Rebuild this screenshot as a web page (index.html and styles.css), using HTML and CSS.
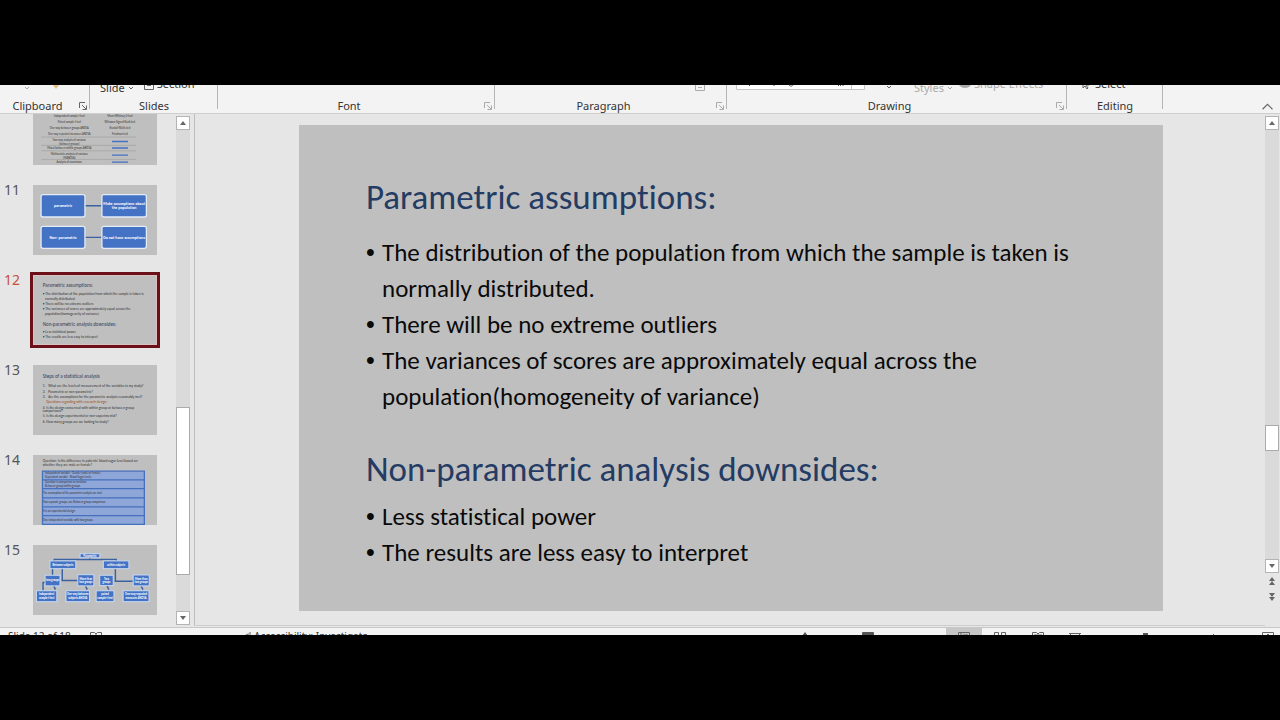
FILE: index.html
```html
<!DOCTYPE html>
<html lang="en">
<head>
<meta charset="utf-8">
<title>Presentation editor</title>
<link rel="stylesheet" href="styles.css">
</head>
<body>
<div class="window">
  <header class="ribbon">
    <section class="group">
      <div class="commands paste-row">
        <svg class="caret" viewBox="0 0 6 4"><path d="M1 1l2 2 2-2"/></svg>
        <svg class="brush" viewBox="0 0 8 6"><path d="M0 0h8L4 5z"/></svg>
      </div>
      <div class="label with-launch"><span>Clipboard</span><button class="launch" aria-label="Clipboard settings"><svg viewBox="0 0 8 8"><path d="M.5 6V.5H6M3 3l4 4M7.500 3.500v4h-4"/></svg></button></div>
    </section>
    <section class="group">
      <div class="commands slide-row">
        <button class="cmd">Slide <svg class="caret" viewBox="0 0 6 4"><path d="M1 1l2 2 2-2"/></svg></button>
        <button class="cmd raised"><svg class="section-icon" viewBox="0 0 10 12"><path d="M.5.5h9v11h-9zM3 7.500h4"/></svg>Section</button>
      </div>
      <div class="label"><span>Slides</span></div>
    </section>
    <section class="group">
      <div class="label with-launch"><span>Font</span><button class="launch dim" aria-label="Font settings"><svg viewBox="0 0 8 8"><path d="M.5 6V.5H6M3 3l4 4M7.500 3.500v4h-4"/></svg></button></div>
    </section>
    <section class="group">
      <div class="commands smart-row"><svg class="smart" viewBox="0 0 10 10"><path d="M.5.5h9v9h-9zM3 6.500h4"/></svg></div>
      <div class="label with-launch"><span>Paragraph</span><button class="launch dim" aria-label="Paragraph settings"><svg viewBox="0 0 8 8"><path d="M.5 6V.5H6M3 3l4 4M7.500 3.500v4h-4"/></svg></button></div>
    </section>
    <section class="group">
      <div class="commands drawing-row">
        <svg class="gallery" viewBox="0 0 130 14"><path class="gallery-box" d="M.5.5h115v12H.5zM115.500.5h13v12h-13z"/><path class="gallery-ink" d="M12 7l2 2M38 7v2M53 8c2 2 4 1 4-1M100 6l3 3M104 9l3-3v3"/></svg>
        <svg class="caret" viewBox="0 0 6 4"><path d="M1 1l2 2 2-2"/></svg>
        <button class="cmd faded">Styles <svg class="caret" viewBox="0 0 6 4"><path d="M1 1l2 2 2-2"/></svg></button>
        <button class="cmd faded raised"><svg class="effect" viewBox="0 0 12 8"><ellipse cx="6" cy="4" rx="6" ry="4"/></svg>Shape Effects</button>
      </div>
      <div class="label with-launch"><span>Drawing</span><button class="launch dim" aria-label="Drawing settings"><svg viewBox="0 0 8 8"><path d="M.5 6V.5H6M3 3l4 4M7.500 3.500v4h-4"/></svg></button></div>
    </section>
    <section class="group">
      <div class="commands select-row">
        <button class="cmd raised"><svg class="pointer" viewBox="0 0 8 11"><path d="M1 1v8l2-2 2 3 1-1-2-3h3z"/></svg>Select</button>
      </div>
      <div class="label"><span>Editing</span></div>
    </section>
    <div class="ribbon-end"><button class="collapse" aria-label="Collapse ribbon"><svg viewBox="0 0 10 6"><path d="M.5 5.500L5 1l4.500 4.500"/></svg></button></div>
  </header>

  <main class="work">
    <nav class="thumbs" aria-label="Slides">
      <button class="thumb"><span class="num">10</span>
        <svg class="mini" viewBox="0 0 864 486">
          <g class="tiny mid">
            <text x="253" y="154">Independent sample t-test</text><text x="606" y="154">Mann-Whitney U-test</text>
            <text x="253" y="194">Paired sample t-test</text><text x="606" y="194">Wilcoxon Signed-Rank test</text>
            <text x="253" y="234">One-way between groups ANOVA</text><text x="606" y="234">Kruskal-Wallis test</text>
            <text x="253" y="278">One-way repeated measures ANOVA</text><text x="606" y="278">Friedman test</text>
            <text x="253" y="319">Two-way analysis of variance</text><text x="253" y="347">(between groups)</text>
            <text x="253" y="375">Mixed between-within groups ANOVA</text>
            <text x="253" y="414">Multivariate analysis of variance</text><text x="253" y="442">(MANOVA)</text>
            <text x="253" y="473">Analysis of covariance</text>
          </g>
          <path class="rule" d="M58 292h660M58 350h660M58 388h660M58 448h660"/>
          <path class="dash" d="M550 323h112M550 369h112M550 418h112M550 467h112"/>
        </svg>
      </button>
      <button class="thumb"><span class="num">11</span>
        <svg class="mini" viewBox="0 0 864 486">
          <path class="link" d="M360 144h120M360 364h120"/>
          <g class="node"><rect x="56" y="66" width="306" height="156" rx="14"/><rect x="480" y="66" width="310" height="156" rx="14"/><rect x="56" y="288" width="306" height="152" rx="14"/><rect x="480" y="288" width="310" height="152" rx="14"/></g>
          <g class="node-text"><text x="209" y="152">parametric</text><text x="635" y="138">Make assumptions about</text><text x="635" y="168">the population</text><text x="209" y="372">Non- parametric</text><text x="635" y="372">Do not have assumptions</text></g>
        </svg>
      </button>
      <button class="thumb current" aria-current="true"><span class="num">12</span>
        <svg class="mini" viewBox="0 0 864 486">
          <g class="heading"><text x="68" y="84">Parametric assumptions:</text><text x="68" y="354">Non-parametric analysis downsides:</text></g>
          <g class="body">
            <text x="68" y="136">• The distribution of the population from which the sample is taken is</text>
            <text x="84" y="172">normally distributed.</text>
            <text x="68" y="208">• There will be no extreme outliers</text>
            <text x="68" y="244">• The variances of scores are approximately equal across the</text>
            <text x="84" y="280">population(homogeneity of variance)</text>
            <text x="68" y="400">• Less statistical power</text>
            <text x="68" y="436">• The results are less easy to interpret</text>
          </g>
        </svg>
      </button>
      <button class="thumb"><span class="num">13</span>
        <svg class="mini" viewBox="0 0 864 486">
          <g class="heading"><text x="68" y="88">Steps of a statistical analysis</text></g>
          <g class="body">
            <text x="68" y="154">1.</text><text x="106" y="154">What are the levels of measurement of the variables in my study?</text>
            <text x="68" y="192">2.</text><text x="106" y="192">Parametric or non-parametric?</text>
            <text x="68" y="228">3.</text><text x="106" y="228">Are the assumptions for the parametric analysis reasonably met?</text>
            <text class="rust" x="92" y="266">Questions regarding with research design:</text>
            <text x="68" y="304">4. Is the design concerned with within group or between group</text>
            <text x="68" y="330">comparisons?</text>
            <text x="68" y="362">5. Is the design experimental or non-experimental?</text>
            <text x="68" y="402">6. How many groups are we looking to study?</text>
          </g>
        </svg>
      </button>
      <button class="thumb"><span class="num">14</span>
        <svg class="mini" viewBox="0 0 864 486">
          <g class="body"><text x="68" y="50">Question: Is the difference in patients' blood sugar level based on</text><text x="68" y="76">whether they are male or female?</text></g>
          <path class="cells" d="M66 112h710v370H66zM66 172h710M66 234h710M66 298h710M66 360h710M66 422h710"/>
          <g class="body tiny">
            <text x="84" y="134">Independent variable - Gender (male or female)</text><text x="84" y="158">Dependent variable - Blood Sugar levels</text>
            <text x="84" y="194">Question is comparison or variation</text><text x="84" y="220">Between-group/within groups</text>
            <text x="70" y="274">The assumption of the parametric analysis are met.</text>
            <text x="70" y="334">Two separate groups, use Between group comparison.</text>
            <text x="70" y="396">It is an experimental design.</text>
            <text x="70" y="460">One independent variable with two groups.</text>
          </g>
        </svg>
      </button>
      <button class="thumb"><span class="num">15</span>
        <svg class="mini" viewBox="0 0 864 486">
          <path class="tree" d="M396 86v14H148v20M396 100h184v20M204 160v86h115M136 160v60M84 260H70v60M574 160v92h126M144 280l12 30M364 280l14 30M514 276l14 34M752 280l14 30"/>
          <g class="node thin"><rect x="328" y="60" width="138" height="28"/><rect x="118" y="110" width="180" height="54"/><rect x="490" y="110" width="178" height="54"/><rect x="84" y="210" width="104" height="74"/><rect x="312" y="206" width="112" height="78"/><rect x="465" y="210" width="94" height="72"/><rect x="698" y="208" width="112" height="76"/><rect x="24" y="318" width="142" height="76"/><rect x="230" y="318" width="164" height="76"/><rect x="440" y="318" width="124" height="76"/><rect x="628" y="318" width="180" height="76"/></g>
          <g class="node-text small">
            <text x="397" y="80">Parametric</text><text x="208" y="144">Between subjects</text><text x="579" y="144">within subjects</text>
            <text x="136" y="253">two groups</text><text x="368" y="240">More than</text><text x="368" y="262">two groups</text><text x="512" y="240">Two</text><text x="512" y="262">groups</text><text x="754" y="240">More than</text><text x="754" y="262">two groups</text>
            <text x="95" y="350">Independent</text><text x="95" y="372">sample t-test</text><text x="312" y="350">One-way between</text><text x="312" y="372">subjects ANOVA</text><text x="502" y="350">paired</text><text x="502" y="372">sample t-test</text><text x="718" y="350">One-way repeated</text><text x="718" y="372">measures ANOVA</text>
          </g>
        </svg>
      </button>
    </nav>
    <div class="scroll">
      <button class="arrow" aria-label="Scroll up"><svg viewBox="0 0 6 4"><path d="M0 4l3-4 3 4z"/></svg></button>
      <div class="track list-track"><div class="knob"></div></div>
      <button class="arrow" aria-label="Scroll down"><svg viewBox="0 0 6 4"><path d="M0 0l3 4 3-4z"/></svg></button>
    </div>
    <div class="canvas">
      <article class="slide">
        <h2>Parametric assumptions:</h2>
        <ul>
          <li>The distribution of the population from which the sample is taken is normally distributed.</li>
          <li>There will be no extreme outliers</li>
          <li>The variances of scores are approximately equal across the population(homogeneity of variance)</li>
        </ul>
        <h2 class="second">Non-parametric analysis downsides:</h2>
        <ul>
          <li>Less statistical power</li>
          <li>The results are less easy to interpret</li>
        </ul>
      </article>
    </div>
    <div class="scroll page-scroll">
      <button class="arrow" aria-label="Scroll up"><svg viewBox="0 0 6 4"><path d="M0 4l3-4 3 4z"/></svg></button>
      <div class="track page-track"><div class="knob"></div></div>
      <button class="arrow" aria-label="Scroll down"><svg viewBox="0 0 6 4"><path d="M0 0l3 4 3-4z"/></svg></button>
      <button class="step" aria-label="Previous slide"><svg viewBox="0 0 6 8"><path d="M0 4l3-4 3 4zM0 8l3-4 3 4z"/></svg></button>
      <button class="step" aria-label="Next slide"><svg viewBox="0 0 6 8"><path d="M0 0l3 4 3-4zM0 4l3 4 3-4z"/></svg></button>
    </div>
  </main>

  <footer class="status">
    <div class="status-left">
      <span class="count">Slide 12 of 18</span>
      <svg class="ico book" viewBox="0 0 12 10"><path d="M.5.5h4L6 2 7.500.5h4v9h-11zM6 2v8"/></svg>
      <svg class="ico access" viewBox="0 0 8 10"><path d="M7 0v9M6 2Q1 2 1 8"/></svg>
      <span>Accessibility: Investigate</span>
    </div>
    <div class="status-right">
      <svg class="ico notes" viewBox="0 0 12 10"><path class="solid" d="M3 4l3-4 3 4z"/></svg>
      <svg class="ico comments" viewBox="0 0 12 10"><rect class="solid" width="12" height="9" rx="1"/></svg>
      <button class="view active" aria-label="Normal view"><svg class="ico" viewBox="0 0 12 10"><path d="M.5.5h11v9H.5zM3 0v10M5 3h5"/></svg></button>
      <svg class="ico sorter" viewBox="0 0 12 10"><path d="M.5.5h4v6h-4zM7.500.5h4v6h-4z"/></svg>
      <svg class="ico reading" viewBox="0 0 12 10"><path d="M.5.5h4L6 2 7.500.5h4v9h-11zM6 2v8M2 3h3M7 3h3"/></svg>
      <svg class="ico show" viewBox="0 0 12 10"><path d="M0 1.500h12M1.500 2v6h9V2"/></svg>
      <svg class="ico zoomer" viewBox="0 0 12 10"><path class="solid" d="M4 1h5v8H4z"/></svg>
      <svg class="ico plus" viewBox="0 0 12 10"><path d="M6.500 2v6M4 5h5"/></svg>
      <svg class="ico fit" viewBox="0 0 12 10"><path d="M.5.5h11v9H.5zM6 2v6M4.500 3.500L6 2l1.500 1.500"/></svg>
    </div>
  </footer>
</div>
</body>
</html>
```

FILE: styles.css
```css
* { box-sizing: border-box; }
body {
  margin: 0;
  min-height: 100vh;
  padding: 85px 0;
  display: flex;
  background: #000;
  color: #333;
  font: 11px/14px "Noto Sans", "Open Sans", sans-serif;
}
button {
  margin: 0;
  padding: 0;
  border: 0;
  background: none;
  color: inherit;
  font: inherit;
}
svg { display: block; flex: none; fill: none; stroke: #666; }

.window {
  flex: 1;
  min-width: 0;
  display: grid;
  grid-template-rows: 29px 1fr 8px;
  background: #e6e6e6;
}

/* Ribbon: only the bottom edge of the command rows is in view */
.ribbon {
  display: grid;
  grid-template-columns: 90fr 128fr 277fr 232fr 340fr 96fr 117fr;
  overflow: hidden;
  background: #f3f3f3;
  border-bottom: 1px solid #cfcfcf;
}
.group {
  height: 28px;
  min-width: 0;
  display: flex;
  flex-direction: column;
  justify-content: flex-end;
  background: linear-gradient(#b5b5b5, #b5b5b5) right top / 1px 24px no-repeat;
}
.label { display: grid; align-items: center; text-align: center; }
.label.with-launch { grid-template-columns: 1fr 12px; padding-right: 3px; }
.label.with-launch span { padding-left: 0; }
.launch svg { width: 8px; height: 8px; margin-left: 4px; }
.launch.dim svg { stroke: #aaa; }
.commands { display: flex; align-items: flex-end; white-space: nowrap; }
.cmd { display: flex; align-items: center; gap: 3px; padding-bottom: 4px; }
.cmd.raised { padding-bottom: 8px; }
.cmd.faded { color: #aaa; }
.caret { width: 6px; height: 4px; }
.cmd.faded .caret { stroke: #aaa; }
.paste-row { gap: 22px; padding: 0 0 9px 24px; }
.paste-row .caret { stroke: #aaa; }
.brush { width: 8px; height: 6px; fill: #e9bd84; stroke: none; }
.slide-row { gap: 10px; padding-left: 10px; }
.section-icon { width: 10px; height: 12px; }
.smart-row { justify-content: flex-end; padding: 0 22px 8px 0; }
.smart { width: 10px; height: 10px; stroke: #aaa; }
.drawing-row { padding-left: 9px; }
.drawing-row > .caret { margin: 0 22px 10px 20px; }
.drawing-row .raised { margin-left: 6px; }
.gallery { width: 130px; height: 14px; margin-bottom: 8px; }
.gallery-box { fill: #fff; stroke: #c4c4c4; }
.gallery-ink { stroke: #555; }
.effect { width: 12px; height: 8px; fill: #aaa; stroke: none; }
.select-row { padding-left: 15px; }
.select-row .cmd { gap: 5px; }
.pointer { width: 8px; height: 11px; }
.ribbon-end { display: flex; justify-content: flex-end; align-items: flex-end; padding: 0 7px 3px 0; }
.collapse svg { width: 11px; height: 7px; }

/* Work area */
.work { display: flex; min-height: 0; padding-bottom: 1px; overflow: hidden; }
.thumbs {
  width: 176px;
  height: 512px;
  display: flex;
  flex-direction: column;
  justify-content: flex-end;
  gap: 20px;
  padding: 0 0 11px 4px;
  overflow: hidden;
}
.thumb {
  flex: none;
  display: grid;
  grid-template-columns: 29px 124px;
  align-items: start;
  text-align: left;
}
.num { color: #555; font-size: 14px; line-height: 10px; }
.mini { width: 124px; height: 70px; background: #bfbfbf; stroke: none; }
.current .num { color: #c8503c; }
.current .mini { outline: 3px solid #6b0f18; box-shadow: inset 0 0 0 1px #dcc0c0; }

.mini text { font-family: Carlito, Lato, sans-serif; font-size: 25px; font-variant-ligatures: none; fill: #333; }
.mini .heading text { font-size: 35px; fill: #34405a; }
.mini .tiny text { font-size: 20px; }
.mini .mid text, .mini .node-text text { text-anchor: middle; }
.mini .node-text text { font-size: 28px; font-weight: 700; fill: #fff; }
.mini .node-text.small text { font-size: 20px; }
.mini .rust { fill: #9a4a20; }
.rule { stroke: #999; stroke-width: 4; }
.dash { stroke: #4472c4; stroke-width: 10; }
.link, .tree { stroke: #3a62a0; stroke-width: 10; }
.node { fill: #4472c4; stroke: #e4ecf8; stroke-width: 9; }
.node.thin { stroke: #c8daf2; stroke-width: 7; }
.cells { fill: #8ea6d8; stroke: #4470bd; stroke-width: 9; }

.scroll { width: 14px; display: flex; flex-direction: column; padding: 2px 0 1px; }
.arrow {
  height: 14px;
  display: grid;
  place-items: center;
  background: #fff;
  border: 1px solid #b4b4b4;
}
.arrow svg { width: 6px; height: 4px; fill: #666; stroke: none; }
.track { flex: 1; display: grid; background: #dadada; }
.list-track { grid-template-rows: 278fr 168fr 36fr; }
.page-track { grid-template-rows: 295fr 26fr 108fr; }
.knob { grid-row: 2; background: #fff; border: 1px solid #ababab; }
.page-scroll { margin-right: 1px; padding-bottom: 25px; }
.step { height: 8px; margin-top: 4px; display: grid; place-items: center; }
.step + .step { margin-top: 8px; }
.step svg { width: 6px; height: 8px; fill: #666; stroke: none; }

.canvas {
  flex: 1;
  min-width: 0;
  display: flex;
  margin-left: 4px;
  padding: 11px 102px 14px 104px;
  border-left: 1px solid #bdbdbd;
  border-bottom: 1px solid #cdcdcd;
}
.slide {
  flex: 1;
  padding: 50px 68px 40px 67px;
  background: #bfbfbf;
  color: #0a0a0a;
  font-family: Carlito, Lato, sans-serif;
  font-variant-ligatures: none;
}
.slide h2 { margin: 0 0 16px; color: #243b63; font-size: 35px; font-weight: 400; line-height: 44px; }
.slide h2.second { margin: 32px 0 8px; }
.slide ul { margin: 0; padding-left: 16px; list-style: none; font-size: 25px; line-height: 36px; }
.slide li::before {
  content: "•";
  display: inline-block;
  width: 16px;
  margin-left: -16px;
  font-family: "Liberation Sans", sans-serif;
  line-height: 20px;
}

/* Status bar: only its top edge is in view */
.status {
  display: flex;
  justify-content: space-between;
  overflow: hidden;
  padding-left: 8px;
  background: #f3f3f3;
  border-top: 1px solid #c8c8c8;
  font-size: 10px;
  white-space: nowrap;
}
.status-left, .status-right { display: flex; align-items: flex-start; height: 20px; }
.status-left span { padding-top: 1px; }
.ico { width: 12px; height: 10px; margin-top: 4px; }
.solid { fill: #555; stroke: none; }
.count { width: 82px; }
.access { width: 8px; margin: 4px 3px 0 141px; }
.comments { margin-left: 51px; }
.view { display: flex; align-items: flex-start; margin: 0 12px 0 72px; padding: 0 12px; height: 20px; }
.view.active { background: #c6c6c6; }
.reading { margin-left: 26px; }
.show { margin-left: 25px; }
.zoomer { margin-left: 58px; }
.plus { margin-left: 56px; }
.fit { margin: 4px 6px 0 43px; }
```
